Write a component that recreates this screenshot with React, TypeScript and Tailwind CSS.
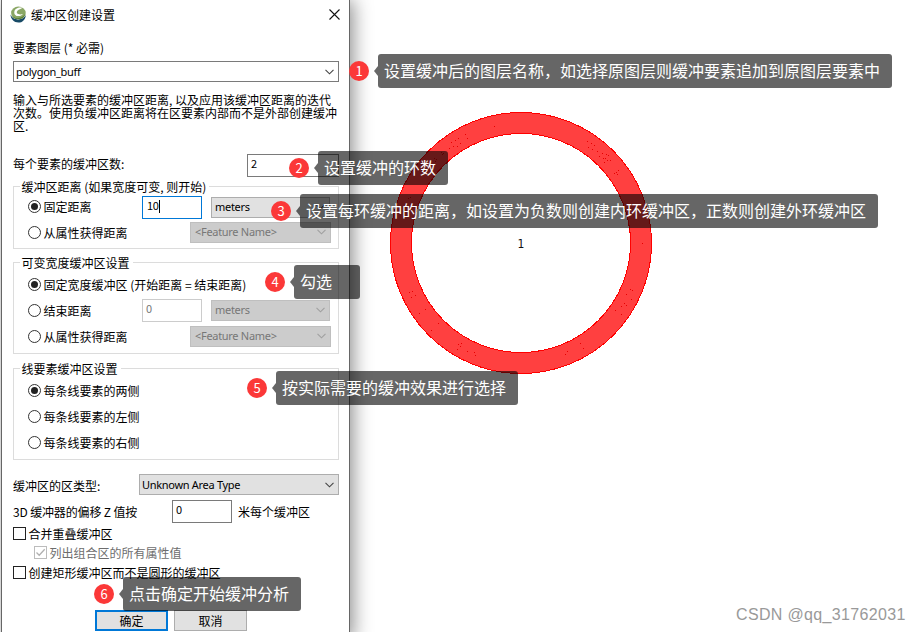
import React from 'react';
import { clsx } from 'clsx';

const CALLOUTS = [
  { id: 1, text: '设置缓冲后的图层名称，如选择原图层则缓冲要素追加到原图层要素中', pos: 'left-[349px] top-[54px]', width: 'w-[514px]' },
  { id: 2, text: '设置缓冲的环数', pos: 'left-[289px] top-[151px]', width: 'w-[130px]' },
  { id: 3, text: '设置每环缓冲的距离，如设置为负数则创建内环缓冲区，正数则创建外环缓冲区', pos: 'left-[271px] top-[194px]', width: 'w-[578px]' },
  { id: 4, text: '勾选', pos: 'left-[265px] top-[265px]', width: 'w-[66px]' },
  { id: 5, text: '按实际需要的缓冲效果进行选择', pos: 'left-[247px] top-[371px]', width: 'w-[242px]' },
  { id: 6, text: '点击确定开始缓冲分析', pos: 'left-[94px] top-[577px]', width: 'w-[178px]' },
];

// Rounding specks left on the ring by the renderer
const SPECKS = [
  [494, 126], [465, 134], [467, 138], [458, 138], [455, 140], [451, 142], [453, 146], [457, 146], [460, 143], [449, 148],
  [441, 152], [443, 153], [442, 154], [434, 158], [436, 159], [435, 161], [410, 197], [408, 198],
  [587, 141], [591, 143], [594, 145], [588, 147], [592, 149], [597, 151], [602, 153], [599, 156], [606, 154], [608, 155],
  [605, 158], [607, 160], [610, 160], [604, 162], [603, 158], [618, 170], [616, 172], [614, 173], [617, 174],
  [642, 243], [630, 289], [632, 290], [626, 294], [631, 299], [624, 303], [626, 305], [621, 306], [615, 310], [621, 314],
  [409, 292], [412, 291], [411, 297], [415, 295], [425, 309], [419, 313], [438, 323], [431, 330],
  [458, 344], [461, 343], [460, 346], [457, 349], [467, 351], [474, 352], [475, 355], [580, 343], [583, 348], [567, 351], [565, 354],
];

const Chevron = ({ className }: { className: string }) => (
  <svg width="9" height="6" viewBox="0 0 9 6" fill="none" stroke="currentColor" strokeWidth="1.1" className={className}>
    <path d="M0.5 0.8 4.5 4.8 8.5 0.8" />
  </svg>
);

interface ComboProps {
  value: string;
  className: string;
  disabled?: boolean;
}

const Combo = ({ value, className, disabled }: ComboProps) => (
  <div className={clsx('flex h-[21px] shrink-0 items-center justify-between border pr-[4px]', className)}>
    <span className="-mt-px font-['Noto_Sans','Noto_Sans_CJK_SC',sans-serif] text-[11px] leading-[19px] tracking-[-0.3px]">{value}</span>
    <Chevron className={disabled ? 'text-[#a0a0a0]' : 'text-[#444]'} />
  </div>
);

const Field = ({ value, className, caret }: { value: string; className: string; caret?: boolean }) => (
  <div className={clsx('flex h-[23px] shrink-0 items-start border bg-white font-[\'Noto_Sans\',sans-serif] text-[11px] leading-[17px] tracking-[-0.35px]', className)}>
    {value}
    {caret && <span className="mt-[3px] h-[13px] w-px bg-black" />}
  </div>
);

const Radio = ({ label, checked }: { label: string; checked?: boolean }) => (
  <div className="flex h-[26px] shrink-0 items-center">
    <span className="-mt-px flex h-[13px] w-[13px] items-center justify-center rounded-full border border-[#333] bg-white">
      {checked && <span className="h-[7px] w-[7px] rounded-full bg-[#222]" />}
    </span>
    <span className="-mt-[2px] ml-[2.5px] whitespace-nowrap">{label}</span>
  </div>
);

const Check = ({ label, checked, disabled }: { label: string; checked?: boolean; disabled?: boolean }) => (
  <div className={clsx('flex h-[19px] items-center', disabled ? 'text-[#6d6d6d]' : 'text-black')}>
    <span className={clsx('flex h-[13px] w-[13px] items-center justify-center border', disabled ? 'border-[#bcbcbc]' : 'border-[#222]')}>
      {checked && (
        <svg width="11" height="11" viewBox="0 0 11 11" fill="none" stroke="#b0b0b0" strokeWidth="1.3">
          <path d="M1.5 5.5 4.2 8.2 9.7 2.2" />
        </svg>
      )}
    </span>
    <span className="ml-[2.5px] whitespace-nowrap">{label}</span>
  </div>
);

interface GroupProps {
  title: string;
  className: string;
  children: React.ReactNode;
}

const Group = ({ title, className, children }: GroupProps) => (
  <section className={clsx('w-[326px] border border-[#dcdcdc] pl-[14px]', className)}>
    <h2 className="-ml-[8px] -mt-[8px] mb-px h-[15px] w-fit whitespace-nowrap bg-white pl-[1.5px] pr-[3px] leading-[15px]">{title}</h2>
    {children}
  </section>
);

const Globe = () => (
  <svg width="17" height="17" viewBox="0 0 17 17">
    <path d="M.5 8.600c1.500 3.600 4.600 5 8 4.800 3.300-.2 5.800-1.700 7.300-4.500C15.500 13.500 12.400 16.600 8.400 16.600 4.100 16.600.7 13.300.5 8.600Z" fill="#174a66" />
    <ellipse cx="8.400" cy="6.900" rx="7.300" ry="6.300" fill="#8aa765" />
    <path d="M12.800 1.800C8.600.8 4.700 2.600 4.300 5.900c-.3 2.500 1.600 4.200 4.100 4.200 2 0 3.700-.8 4.600-2.100-1.500.6-3.400.7-4.700.1-1.800-.8-2-2.600-.6-3.700 1.200-1 3.100-1.400 5.100-2.600Z" fill="#fff" />
    <path d="M1.200 8.500c1.800 3 4.500 3.900 7.300 3.600 2.900-.3 5.100-1.800 6.900-4.300-.7 3.400-3.500 5.500-7 5.500-3.400 0-6.300-1.700-7.200-4.800Z" fill="#5d8136" />
  </svg>
);

const BufferDialog = () => (
  <div className="relative h-[640px] w-[349px] shrink-0 border-x border-[#666] bg-white pl-[11px] text-[12px] leading-[13px] text-black shadow-[3px_0_18px_rgba(0,0,0,0.45)]">
    <header className="flex h-[29px] items-center pr-[9px]">
      <span className="-ml-[3px] -mt-px"><Globe /></span>
      <h1 className="-mt-px ml-[4px] flex-1">缓冲区创建设置</h1>
      <svg width="11" height="11" viewBox="0 0 11 11" stroke="#111" strokeWidth="1.1" className="-mt-px">
        <path d="M.5.5l10 10M10.500.5l-10 10" />
      </svg>
    </header>

    <p className="mt-[12px] h-[14px]">要素图层 (* 必需)</p>
    <Combo value="polygon_buff" className="mt-[6px] w-[326px] border-[#7a7a7a] bg-white pl-[2px]" />
    <p className="mt-[11px] h-[61px] whitespace-nowrap">
      输入与所选要素的缓冲区距离, 以及应用该缓冲区距离的迭代
      <br />
      次数。使用负缓冲区距离将在区要素内部而不是外部创建缓冲
      <br />
      区.
    </p>

    <div className="flex h-[23px] w-[326px] items-center justify-between">
      <span className="-mt-[5px]">每个要素的缓冲区数:</span>
      <Field value="2" className="w-[92px] border-[#7a7a7a] pl-[3px]" />
    </div>

    <Group title="缓冲区距离 (如果宽度可变, 则开始)" className="mt-[9px] h-[63px]">
      <div className="-mt-[1px] flex h-[26px] items-center">
        <div className="w-[114px]"><Radio label="固定距离" checked /></div>
        <Field value="10" caret className="w-[60px] border-[#0078d7] pl-[4px]" />
        <Combo value="meters" className="ml-[9px] w-[119px] border-[#adadad] bg-[#e1e1e1] pl-[3px]" />
      </div>
      <div className="flex h-[26px] items-center">
        <div className="w-[162px]"><Radio label="从属性获得距离" /></div>
        <Combo value="<Feature Name>" disabled className="-mt-[2px] w-[141px] border-[#bfbfbf] bg-[#ccc] pl-[4px] text-[#777]" />
      </div>
    </Group>

    <Group title="可变宽度缓冲区设置" className="mt-[13px] h-[92px]">
      <div className="mt-[2px] h-[26px]"><Radio label="固定宽度缓冲区 (开始距离 = 结束距离)" checked /></div>
      <div className="flex h-[26px] items-center">
        <div className="w-[114px]"><Radio label="结束距离" /></div>
        <Field value="0" className="-mt-px w-[60px] border-[#ccc] pl-[3px] text-[#777]" />
        <Combo value="meters" disabled className="-mt-[2px] ml-[9px] w-[119px] border-[#bfbfbf] bg-[#ccc] pl-[3px] text-[#777]" />
      </div>
      <div className="flex h-[26px] items-center">
        <div className="w-[162px]"><Radio label="从属性获得距离" /></div>
        <Combo value="<Feature Name>" disabled className="-mt-[2px] w-[141px] border-[#bfbfbf] bg-[#ccc] pl-[4px] text-[#777]" />
      </div>
    </Group>

    <Group title="线要素缓冲区设置" className="mt-[14px] h-[92px]">
      <div className="mt-[2px]">
        <Radio label="每条线要素的两侧" checked />
        <Radio label="每条线要素的左侧" />
        <Radio label="每条线要素的右侧" />
      </div>
    </Group>

    <div className="mt-[14px] flex h-[21px] w-[326px] items-center justify-between">
      <span className="mt-[2px]">缓冲区的区类型:</span>
      <Combo value="Unknown Area Type" className="w-[200px] border-[#adadad] bg-[#e1e1e1] pl-[2px]" />
    </div>
    <div className="mt-[5px] flex h-[23px] items-center">
      <span className="w-[159px] tracking-[-0.15px]">3D 缓冲器的偏移 Z 值按</span>
      <Field value="0" className="w-[60px] border-[#7a7a7a] pl-[3px]" />
      <span className="ml-[6px]">米每个缓冲区</span>
    </div>
    <div className="mt-px">
      <Check label="合并重叠缓冲区" />
      <div className="ml-[21px]"><Check label="列出组合区的所有属性值" checked disabled /></div>
      <div className="mt-px"><Check label="创建矩形缓冲区而不是圆形的缓冲区" /></div>
    </div>
    <footer className="ml-[82px] mt-[28px] flex gap-[6px]">
      <button className="h-[21px] w-[73px] border-2 border-[#0078d7] bg-[#e1e1e1]">确定</button>
      <button className="h-[21px] w-[73px] border border-[#adadad] bg-[#e1e1e1]">取消</button>
    </footer>
  </div>
);

const MapView = () => (
  <main className="flex-1 pl-[38px] pt-[110px]">
    <svg width="266" height="266" viewBox="388 110 266 266" shapeRendering="crispEdges">
      <circle cx="521" cy="243" r="120" fill="none" stroke="#ff4040" strokeWidth="22" />
      <circle cx="521" cy="243" r="130.500" fill="none" stroke="#f00" />
      <circle cx="521" cy="243" r="109.500" fill="none" stroke="#f00" />
      {SPECKS.map(([x, y]) => (
        <rect key={`${x}-${y}`} x={x} y={y} width="1" height="1" fill="#e60000" />
      ))}
      <text x="521" y="248" textAnchor="middle" fontSize="12" fontFamily="DejaVu Sans Condensed, sans-serif" fill="#111">1</text>
    </svg>
  </main>
);

export default function App() {
  return (
    <div className="relative flex h-[632px] w-[921px] overflow-hidden bg-white pl-px font-['Noto_Sans_CJK_SC',sans-serif]">
      <BufferDialog />
      <MapView />

      {CALLOUTS.map((item) => (
        <div key={item.id} className={clsx('absolute flex h-[34px] items-center', item.pos)}>
          <span className="flex h-[20px] w-[20px] items-center justify-center rounded-full bg-[#fb3838] text-[13px] leading-[20px] text-white">{item.id}</span>
          <svg width="4" height="10" viewBox="0 0 4 10" className="ml-[5px]">
            <path d="M4 0v10L0 5Z" fill="#000" fillOpacity="0.6" />
          </svg>
          <span className={clsx('h-[34px] whitespace-nowrap rounded-[3px] bg-black/60 pl-[6px] text-[16px] leading-[33px] text-white', item.width)}>{item.text}</span>
        </div>
      ))}

      <span className="absolute left-[736px] top-[603px] whitespace-nowrap font-['Liberation_Sans',sans-serif] text-[16px] leading-[24px] tracking-[0.34px] text-[#999]">CSDN @qq_31762031</span>
    </div>
  );
}
